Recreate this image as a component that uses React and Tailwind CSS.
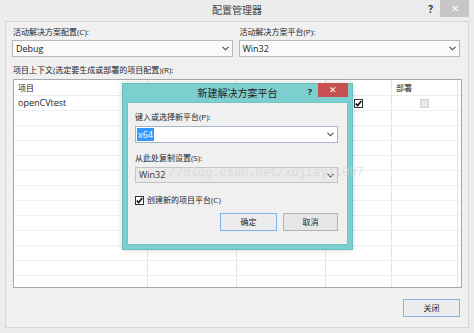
import React from 'react'

const Chevron = () => (
  <svg width="7" height="5" viewBox="0 0 7 5" className="shrink-0">
    <polyline points="0.5,0.8 3.5,3.8 6.5,0.8" fill="none" stroke="#444" strokeWidth="1.1" />
  </svg>
)

const Check = ({ className }) => (
  <span className={`flex items-center justify-center w-[9px] h-[9px] border border-[#333] bg-white ${className || ''}`}>
    <svg width="7" height="7" viewBox="0 0 7 7">
      <path d="M0.8 3.6 L2.7 5.6 L6.3 1" fill="none" stroke="#111" strokeWidth="1.6" />
    </svg>
  </span>
)

// only the first and last headers are visible, the rest sit under the dialog
const cols = ['项目', '', '', '', '部署']

export default function App() {
  const rows = Array.from({ length: 13 })

  return (
    <div className="relative w-[474px] h-[333px] overflow-hidden bg-[#ececec] text-[#1e1e1e] font-['Open_Sans','Noto_Sans_CJK_SC',sans-serif]">
      {/* title bar */}
      <div className="flex h-[21px]">
        <div className="flex-1" />
        <div className="text-[10px] leading-[21px] text-[#444]">配置管理器</div>
        <div className="flex-1 flex justify-end items-start">
          <span className="text-[10px] font-bold leading-[19px] mr-[7px] text-[#333]">?</span>
          <div className="w-[29px] h-[17px] mr-[5px] bg-[#c7c7c7] flex items-center justify-center text-white text-[10px]">✕</div>
        </div>
      </div>

      {/* client */}
      <div className="mx-[5px] h-[307px] border border-[#d6d6d6] bg-[#f0f0f0] pl-[6px] pr-[8px] pt-[4px]">
        <div className="flex gap-[6px]">
          <div className="w-[221px]">
            <div className="text-[8px] leading-[12px] pl-[1px]">活动解决方案配置(C):</div>
            <div className="mt-[2px] h-[17px] border border-[#b9b9b9] bg-[#fafafa] flex items-center justify-between pl-[3px] pr-[3px]">
              <span className="text-[9px]">Debug</span>
              <Chevron />
            </div>
          </div>
          <div className="w-[222px]">
            <div className="text-[8px] leading-[12px] pl-[1px]">活动解决方案平台(P):</div>
            <div className="mt-[2px] h-[17px] border border-[#b9b9b9] bg-[#fafafa] flex items-center justify-between pl-[3px] pr-[3px]">
              <span className="text-[9px]">Win32</span>
              <Chevron />
            </div>
          </div>
        </div>

        <div className="mt-[7px] text-[8px] leading-[12px] pl-[1px]">项目上下文(选定要生成或部署的项目配置)(R):</div>

        <div className="mt-[3px] ml-[1px] w-[449px] h-[209px] border border-[#a8a8a8] bg-white overflow-hidden">
          <div className="grid grid-cols-[134px_89px_89px_66px_66px] h-[16px] border-b border-[#ececec]">
            {cols.map((c, i) => (
              <div key={i} className="border-r border-[#e4e4e4] pl-[4px] text-[8px] leading-[15px]">{c}</div>
            ))}
          </div>
          {rows.map((_, i) => (
            <div key={i} className="grid grid-cols-[134px_89px_89px_66px_66px] h-[15px] border-b border-[#efefef]">
              <div className="border-r border-[#e4e4e4] pl-[4px] text-[9px] leading-[14px]">{i === 0 ? 'openCVtest' : ''}</div>
              <div className="border-r border-[#e4e4e4]" />
              <div className="border-r border-[#e4e4e4]" />
              <div className="border-r border-[#e4e4e4] flex items-center justify-center">
                {i === 0 && <Check />}
              </div>
              <div className="border-r border-[#e4e4e4] flex items-center justify-center">
                {i === 0 && <span className="w-[9px] h-[9px] border border-[#cfcfcf] bg-[#e8e8e8]" />}
              </div>
            </div>
          ))}
        </div>

        <div className="mt-[11px] flex justify-end">
          <div className="w-[57px] h-[18px] border border-[#7eb4ea] bg-[#ececec] flex items-center justify-center text-[8px]">关闭</div>
        </div>
      </div>

      {/* dialog */}
      <div className="absolute left-[122px] top-[83px] w-[231px] h-[167px] bg-[#7dcfcf] border border-[#6cbcbc] flex flex-col shadow-[0_0_6px_rgba(0,0,0,0.15)]">
        <div className="flex h-[18px]">
          <div className="flex-1" />
          <div className="text-[10px] leading-[19px] text-[#222]">新建解决方案平台</div>
          <div className="flex-1 flex justify-end items-start">
            <span className="text-[9px] font-bold leading-[15px] mr-[6px] text-[#222]">?</span>
            <div className="w-[30px] h-[14px] mr-[4px] -mt-[1px] bg-[#c75050] flex items-center justify-center text-white text-[9px]">✕</div>
          </div>
        </div>
        <div className="flex-1 mx-[4px] mb-[4px] bg-[#f0f0f0] border border-[#74c3c3] pl-[7px] pr-[9px] pt-[8px]">
          <div className="text-[8px] leading-[12px]">键入或选择新平台(P):</div>
          <div className="mt-[3px] h-[17px] border border-[#a7b7c9] bg-white flex items-center justify-between pl-[1px] pr-[3px]">
            <span className="bg-[#3399ff] text-white text-[9px] leading-[13px] px-[1px]">x64</span>
            <Chevron />
          </div>
          <div className="mt-[9px] text-[8px] leading-[12px]">从此处复制设置(S):</div>
          <div className="mt-[3px] h-[16px] border border-[#c4c4c4] bg-[#e9e9e9] flex items-center justify-between pl-[3px] pr-[3px]">
            <span className="text-[9px] text-[#333]">Win32</span>
            <Chevron />
          </div>
          <div className="mt-[11px] flex items-center gap-[3px] h-[12px]">
            <Check />
            <span className="text-[8px]">创建新的项目平台(C)</span>
          </div>
          <div className="mt-[7px] flex justify-end gap-[6px]">
            <div className="w-[57px] h-[18px] border border-[#7eb4ea] bg-[#ececec] flex items-center justify-center text-[8px]">确定</div>
            <div className="w-[55px] h-[18px] border border-[#b4b4b4] bg-[#e6e6e6] flex items-center justify-center text-[8px]">取消</div>
          </div>
        </div>
      </div>

      {/* watermark */}
      <div className="absolute left-[162px] top-[166px] text-[12px] leading-[14px] text-[#d2d2d2]/70 font-['Liberation_Mono',monospace] whitespace-nowrap pointer-events-none">
        ://blog.csdn.net/xujiayi1097
      </div>
    </div>
  )
}
